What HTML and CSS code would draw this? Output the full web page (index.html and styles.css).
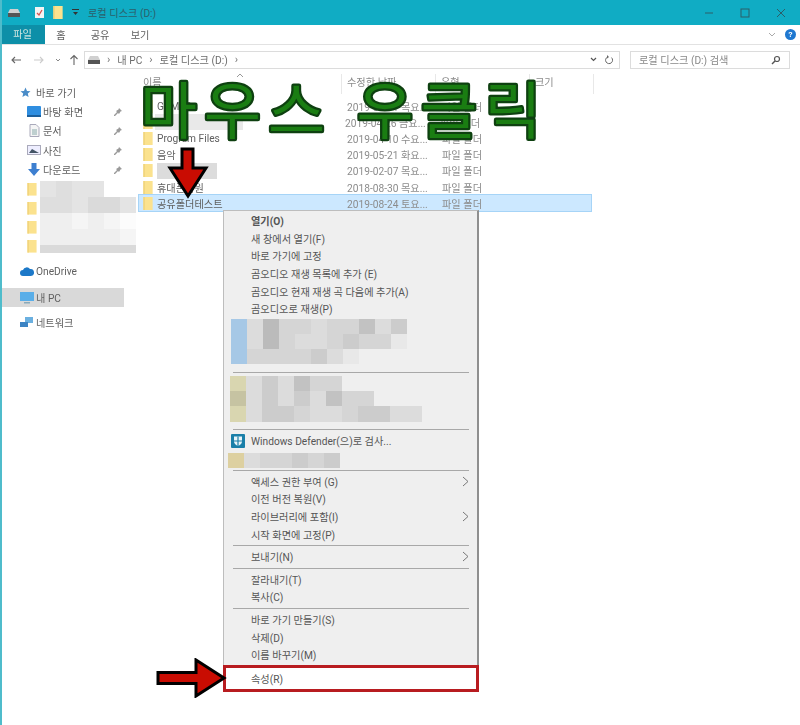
FILE: index.html
```html
<!DOCTYPE html>
<html lang="ko">
<head>
<meta charset="utf-8">
<title>로컬 디스크 (D:)</title>
<link rel="stylesheet" href="styles.css">
</head>
<body>
<svg class="defs" width="0" height="0" aria-hidden="true">
  <symbol id="folder" viewBox="0 0 10 14"><rect width="10" height="14" fill="#fbe28e"/><rect x="0" y="0" width="1.500" height="14" fill="#efd27a"/></symbol>
  <symbol id="pin" viewBox="0 0 10 10"><path d="M6 1l3 3-1.500.5L6 7 5 6 2 9l-1 0 0-1 3-3-1-1 2.500-1.500z" fill="#9a9a9a"/></symbol>
  <symbol id="drive" viewBox="0 0 12 8"><path d="M2 0h8l2 4v4H0V4z" fill="#d0d0d0"/><rect y="4" width="12" height="4" fill="#555"/></symbol>
</svg>
<div class="window">
  <header class="titlebar">
    <svg class="t-ico" width="12" height="8"><use href="#drive"/></svg>
    <svg class="t-doc" width="9" height="11" viewBox="0 0 9 11"><rect width="9" height="11" fill="#f4f4f4"/><path d="M2 6l2 2 3-5" stroke="#d9534f" stroke-width="1.300" fill="none"/></svg>
    <svg class="t-fold" width="10" height="13"><use href="#folder"/></svg>
    <svg class="t-drop" width="7" height="7" viewBox="0 0 7 7"><rect y="0" width="7" height="1" fill="#333"/><path d="M1 3h5L3.500 6z" fill="#333"/></svg>
    <span class="t-text">로컬 디스크 (D:)</span>
    <span class="t-controls">
      <svg width="10" height="10" viewBox="0 0 10 10"><path d="M1 5h8" stroke="#2c5e68" stroke-width="1"/></svg>
      <svg width="10" height="10" viewBox="0 0 10 10"><rect x="1" y="1" width="8" height="8" fill="none" stroke="#2c5e68"/></svg>
      <svg width="10" height="10" viewBox="0 0 10 10"><path d="M1 1l8 8M9 1l-8 8" stroke="#2c5e68"/></svg>
    </span>
  </header>
  <nav class="ribbon">
    <span class="tab tab-file">파일</span>
    <span class="tab">홈</span>
    <span class="tab">공유</span>
    <span class="tab">보기</span>
    <span class="ribbon-end">
      <svg width="8" height="5" viewBox="0 0 8 5"><path d="M1 1l3 3 3-3" stroke="#aaa" fill="none"/></svg>
      <span class="help">?</span>
    </span>
  </nav>
  <div class="addressrow">
    <svg width="12" height="10" viewBox="0 0 12 10"><path d="M11 5H2M5 2L2 5l3 3" stroke="#666" stroke-width="1.100" fill="none"/></svg>
    <svg class="nav-fwd" width="12" height="10" viewBox="0 0 12 10"><path d="M1 5h9M7 2l3 3-3 3" stroke="#ccc" stroke-width="1.100" fill="none"/></svg>
    <svg class="nav-drop" width="6" height="4" viewBox="0 0 6 4"><path d="M1 1l2 2 2-2" stroke="#888" fill="none"/></svg>
    <svg class="nav-up" width="10" height="11" viewBox="0 0 10 11"><path d="M5 11V2M1.500 5L5 1.500 8.500 5" stroke="#666" stroke-width="1.100" fill="none"/></svg>
    <div class="address">
      <svg width="12" height="8"><use href="#drive"/></svg>
      <span class="crumb-sep">›</span><span>내 PC</span>
      <span class="crumb-sep">›</span><span>로컬 디스크 (D:)</span>
      <span class="crumb-sep">›</span>
      <span class="addr-end">
        <svg width="7" height="5" viewBox="0 0 7 5"><path d="M1 1l2.500 2.500L6 1" stroke="#555" stroke-width="1.200" fill="none"/></svg>
        <svg class="refresh" width="10" height="10" viewBox="0 0 10 10"><path d="M7.500 2.600A3.500 3.500 0 1 1 3.500 2" stroke="#666" fill="none"/><path d="M3 0l2 2-2 1.500z" fill="#666"/></svg>
      </span>
    </div>
    <div class="search">
      <span>로컬 디스크 (D:) 검색</span>
      <svg width="10" height="10" viewBox="0 0 10 10"><circle cx="6" cy="4" r="2.500" stroke="#555" fill="none" stroke-width="1.200"/><path d="M4 6L1 9" stroke="#555" stroke-width="1.500"/></svg>
    </div>
  </div>
  <div class="main">
    <aside class="sidebar">
      <div class="nav nav-top">
        <svg width="11" height="11" viewBox="0 0 11 11"><path d="M5.500.5l1.500 3.400 3.500.3-2.700 2.300.8 3.500-3.100-1.800-3.100 1.800.8-3.500L.5 4.200 4 3.900z" fill="#4a8cc8"/></svg>
        <span>바로 가기</span>
      </div>
      <div class="nav nav-sub">
        <svg width="14" height="11" viewBox="0 0 14 11"><rect width="14" height="10" rx="1" fill="#2f8ee0"/><rect y="9" width="14" height="2" fill="#1c5f9c"/></svg>
        <span>바탕 화면</span><svg class="pin" width="10" height="10"><use href="#pin"/></svg>
      </div>
      <div class="nav nav-sub">
        <svg width="14" height="13" viewBox="0 0 14 13"><path d="M3 .5h6l3 3v9H3z" fill="#f5f5f5" stroke="#aab"/><path d="M5 6h5M5 8h5M5 10h5" stroke="#8aa"/></svg>
        <span>문서</span><svg class="pin" width="10" height="10"><use href="#pin"/></svg>
      </div>
      <div class="nav nav-sub">
        <svg width="14" height="11" viewBox="0 0 14 11"><rect x=".5" y=".5" width="13" height="9" fill="#eef" stroke="#aab"/><path d="M2 8l3-4 7 4z" fill="#456"/></svg>
        <span>사진</span><svg class="pin" width="10" height="10"><use href="#pin"/></svg>
      </div>
      <div class="nav nav-sub">
        <svg width="14" height="13" viewBox="0 0 14 13"><path d="M4.500 0h5v6H13l-6 7-6-7h3.500z" fill="#3d7fd0"/></svg>
        <span>다운로드</span><svg class="pin" width="10" height="10"><use href="#pin"/></svg>
      </div>
      <div class="side-blur">
        <div class="side-folders">
          <svg width="10" height="13"><use href="#folder"/></svg>
          <svg width="10" height="13"><use href="#folder"/></svg>
          <svg width="10" height="13"><use href="#folder"/></svg>
          <svg width="10" height="13"><use href="#folder"/></svg>
        </div>
        <div class="side-mosaic">
          <div class="mosaic"><i class="n1"></i><i class="n2"></i><i class="n1"></i><i class="n1"></i></div>
          <div class="mosaic"><i class="n2"></i><i class="n2"></i><i class="n1"></i><i class="n5"></i><i class="n5"></i><i class="n1"></i></div>
          <div class="mosaic"><i class="n3"></i><i class="n3"></i><i class="n4"></i><i class="n3"></i><i class="n4"></i><i class="n6"></i></div>
          <div class="mosaic"><i class="n3"></i><i class="n3"></i><i class="n3"></i><i class="n3"></i><i class="n3"></i><i class="n4"></i></div>
          <div class="mosaic mosaic-band"><i class="n5"></i><i class="n5"></i><i class="n5"></i><i class="n5"></i><i class="n5"></i><i class="n5"></i></div>
        </div>
      </div>
      <div class="nav nav-top nav-wide nav-drive">
        <svg width="14" height="9" viewBox="0 0 14 9"><path d="M3 9a3 3 0 0 1 0-6 4 4 0 0 1 7-1 3.500 3.500 0 0 1 1 7z" fill="#1c78c8"/></svg>
        <span>OneDrive</span>
      </div>
      <div class="nav nav-top nav-wide nav-pc">
        <svg width="14" height="12" viewBox="0 0 14 12"><rect width="14" height="9" fill="#5aaee8"/><rect x="4" y="10" width="6" height="1.500" fill="#8ab"/></svg>
        <span>내 PC</span>
      </div>
      <div class="nav nav-top nav-wide nav-net">
        <svg width="14" height="11" viewBox="0 0 14 11"><rect x="5" y="0" width="8" height="6" fill="#6bb0e0"/><rect x="0" y="5" width="8" height="5" fill="#3c84c4"/></svg>
        <span>네트워크</span>
      </div>
    </aside>
    <section class="files">
      <div class="columns">
        <span class="col-name">이름</span>
        <span class="col-date">수정한 날짜</span>
        <span class="col-type">유형</span>
        <span class="col-size">크기</span>
      </div>
      <div class="row"><svg width="10" height="13"><use href="#folder"/></svg><span class="name">GAMES</span><span class="date">2019-08-01 목요...</span><span class="type">파일 폴더</span></div>
      <div class="row"><svg width="10" height="13"><use href="#folder"/></svg><span class="name name-blur"></span><span class="date">2019-04-26 금요...</span><span class="type">파일 폴더</span></div>
      <div class="row"><svg width="10" height="13"><use href="#folder"/></svg><span class="name">Program Files</span><span class="date">2019-04-10 수요...</span><span class="type">파일 폴더</span></div>
      <div class="row"><svg width="10" height="13"><use href="#folder"/></svg><span class="name">음악</span><span class="date">2019-05-21 화요...</span><span class="type">파일 폴더</span></div>
      <div class="row"><svg width="10" height="13"><use href="#folder"/></svg><span class="name name-blur2"></span><span class="date">2019-02-07 목요...</span><span class="type">파일 폴더</span></div>
      <div class="row"><svg width="10" height="13"><use href="#folder"/></svg><span class="name">휴대폰자원</span><span class="date">2018-08-30 목요...</span><span class="type">파일 폴더</span></div>
      <div class="row row-selected"><svg width="10" height="13"><use href="#folder"/></svg><span class="name">공유폴더테스트</span><span class="date">2019-08-24 토요...</span><span class="type">파일 폴더</span></div>
    </section>
  </div>

  <svg class="sort-caret" width="8" height="5" viewBox="0 0 8 5"><path d="M1 4l3-3 3 3" stroke="#999" fill="none"/></svg>
  <svg class="headline" width="440" height="90" viewBox="0 0 440 90"><text class="headline-text" x="2" y="64">마우스 우클릭</text></svg>
  <svg class="arrow-down" width="44" height="54" viewBox="0 0 44 54"><path d="M16 2h11v19h13L22 49 4 21h12z" fill="#c90c02" stroke="#000" stroke-width="3"/></svg>

  <div class="menu">
    <div class="mi mi-bold">열기(O)</div>
    <div class="mi">새 창에서 열기(F)</div>
    <div class="mi">바로 가기에 고정</div>
    <div class="mi">곰오디오 재생 목록에 추가 (E)</div>
    <div class="mi">곰오디오 현재 재생 곡 다음에 추가(A)</div>
    <div class="mi">곰오디오로 재생(P)</div>
    <div class="mblock">
      <div class="mrow"><i class="b"></i><i class="s2"></i><i class="s6"></i><i class="s3"></i><i class="s3"></i><i class="s2"></i><i class="s3"></i><i class="s3"></i><i class="s5"></i><i class="s2"></i><i class="s4"></i></div>
      <div class="mrow"><i class="b"></i><i class="s2"></i><i class="s6"></i><i class="s3"></i><i class="s2"></i><i class="s2"></i><i class="s3"></i><i class="s4"></i><i class="s3"></i><i class="s3"></i><i class="s1"></i></div>
      <div class="mrow"><i class="b"></i><i class="s3"></i><i class="s3"></i><i class="s3"></i><i class="s3"></i><i class="s4"></i><i class="s2"></i><i class="s1"></i></div>
    </div>
    <hr class="sep sep-a">
    <div class="mblock mblock-two">
      <div class="mrow"><i class="y1"></i><i class="s2"></i><i class="s4"></i><i class="s2"></i><i class="s5"></i><i class="s3"></i><i class="s3"></i></div>
      <div class="mrow"><i class="y2"></i><i class="s2"></i><i class="s4"></i><i class="s2"></i><i class="s4"></i><i class="s2"></i><i class="s5"></i><i class="s3"></i><i class="s3"></i></div>
      <div class="mrow mrow-tall"><i class="y1"></i><i class="s2"></i><i class="s4"></i><i class="s4"></i><i class="s3"></i><i class="s2"></i><i class="s2"></i><i class="s3"></i><i class="s4"></i><i class="s4"></i><i class="s2"></i><i class="s2"></i></div>
    </div>
    <hr class="sep sep-b">
    <div class="mi mi-icon">
      <svg width="14" height="14" viewBox="0 0 14 14"><rect width="14" height="14" rx="1" fill="#1a7fa8"/><path d="M3 2.500h8v5c0 2-2 3.500-4 4.500-2-1-4-2.500-4-4.500z" fill="#e8f4f8"/><path d="M7 2.500V12M3 7h8" stroke="#1a7fa8" stroke-width="1.200"/></svg>
      <span>Windows Defender(으)로 검사...</span>
    </div>
    <div class="mrow mrow-three"><i class="y3"></i><i class="s2"></i><i class="s3"></i><i class="s3"></i><i class="s4"></i><i class="s3"></i><i class="s4"></i></div>
    <hr class="sep sep-c">
    <div class="mi mi-sub">액세스 권한 부여 (G)<svg width="7" height="11" viewBox="0 0 7 11"><path d="M1 1l5 4.500L1 10" stroke="#777" fill="none"/></svg></div>
    <div class="mi">이전 버전 복원(V)</div>
    <div class="mi mi-sub">라이브러리에 포함(I)<svg width="7" height="11" viewBox="0 0 7 11"><path d="M1 1l5 4.500L1 10" stroke="#777" fill="none"/></svg></div>
    <div class="mi">시작 화면에 고정(P)</div>
    <hr class="sep sep-d">
    <div class="mi mi-sub">보내기(N)<svg width="7" height="11" viewBox="0 0 7 11"><path d="M1 1l5 4.500L1 10" stroke="#777" fill="none"/></svg></div>
    <hr class="sep sep-d">
    <div class="mi">잘라내기(T)</div>
    <div class="mi">복사(C)</div>
    <hr class="sep sep-d">
    <div class="mi">바로 가기 만들기(S)</div>
    <div class="mi">삭제(D)</div>
    <div class="mi">이름 바꾸기(M)</div>
    <div class="mi mi-hot">속성(R)</div>
  </div>
  <svg class="arrow-right" width="72" height="40" viewBox="0 0 72 40"><path d="M2 14.500h38V2l28 18-28 18V25.500H2z" fill="#c90c02" stroke="#000" stroke-width="3"/></svg>
</div>
</body>
</html>
```

FILE: styles.css
```css
* { box-sizing: border-box; }
html, body { margin: 0; padding: 0; background: #fff; }
body { width: 800px; height: 725px; overflow: hidden; }
.defs { position: absolute; }
.window {
  position: relative;
  width: 800px;
  height: 725px;
  overflow: hidden;
  border-left: 2px solid #4fbccb;
  font-family: Roboto, "Noto Sans CJK KR", "Noto Sans", sans-serif;
  font-size: 10.2px;
  color: #5f5f5f;
  filter: blur(0.5px);
}
.titlebar {
  display: flex;
  align-items: center;
  height: 25px;
  margin-left: -2px;
  padding-left: 8px;
  background: #10acc4;
  color: #2b5f6b;
  font-size: 10.2px;
}
.t-doc { margin-left: 15px; }
.t-fold { margin-left: 9px; }
.t-drop { margin-left: 9px; }
.t-text { margin-left: 9px; }
.t-controls { margin-left: auto; display: flex; gap: 26px; padding-right: 14px; }
.ribbon {
  display: flex;
  align-items: center;
  height: 20px;
  margin-left: -2px;
  border-bottom: 1px solid #e2e2e2;
}
.tab { width: 40px; text-align: center; }
.tab:nth-child(2) { margin-left: -4px; margin-right: -1px; }
.tab-file { width: 45px; height: 19px; line-height: 19px; background: #0d8fa8; color: #cfe6e0; }
.ribbon-end { margin-left: auto; display: flex; align-items: center; gap: 9px; padding-right: 4px; }
.help {
  width: 11px; height: 11px; border-radius: 50%;
  background: #1f78d0; color: #fff;
  font-size: 8px; line-height: 11px; text-align: center; font-weight: 700;
}
.addressrow { display: flex; align-items: center; height: 29px; padding-left: 8px; }
.nav-fwd { margin-left: 11px; }
.nav-drop { margin-left: 10px; }
.nav-up { margin-left: 8px; }
.address {
  display: flex; align-items: center; gap: 6px;
  width: 536px; height: 18px; margin-left: 5px; padding-left: 3px;
  border: 1px solid #dcdcdc; color: #6c6c6c;
}
.crumb-sep { color: #777; margin: 0 1px; font-size: 11px; line-height: 11px; }
.addr-end { margin-left: auto; display: flex; align-items: center; gap: 7px; height: 100%; }
.refresh { margin-right: 5px; }
.search {
  display: flex; align-items: center; justify-content: space-between;
  width: 160px; height: 18px; margin-left: 10px; padding: 0 8px;
  border: 1px solid #dcdcdc; color: #888;
}
.main { display: flex; }
.sidebar { width: 136px; padding-top: 9px; flex: none; }
.nav { display: flex; align-items: center; height: 19.2px; color: #5f5f5f; }
.nav-top { padding-left: 18px; gap: 5px; }
.nav-wide { gap: 2px; }
.nav-sub { padding-left: 25px; gap: 2px; position: relative; }
.pin { position: absolute; left: 111px; top: 5px; }
.side-blur { display: flex; gap: 3px; margin-top: 2px; height: 72px; padding-left: 25px; }
.side-folders { display: flex; flex-direction: column; gap: 6.300px; padding-top: 2px; }
.side-mosaic { display: flex; flex-direction: column; }
.mosaic { display: flex; height: 16px; }
.mosaic i { width: 16px; height: 100%; }
.mosaic-band { height: 8px; }
.nav-drive { margin-top: 9px; }
.nav-pc { margin: 7px 14px 6px -2px; padding-left: 20px; background: #d9d9d9; }
.n1 { background: #e4e4e4; }
.n2 { background: #dedede; }
.n3 { background: #efefef; }
.n4 { background: #f5f5f5; }
.n5 { background: #dadada; }
.n6 { background: #fcfcfc; }
.files { flex: 1; }
.columns { display: flex; height: 24px; color: #8c8c8c; }
.columns span { display: block; height: 20px; border-right: 1px solid #e8e8e8; padding-left: 5px; }
.col-name { width: 204px; }
.col-date { width: 94px; }
.col-type { width: 94px; }
.col-size { width: 64px; }
.files .row {
  display: flex; align-items: center;
  width: 454px; height: 16.2px;
  padding-left: 5px; color: #8c8c8c;
}
.row svg { flex: none; }
.name { width: 190px; margin-left: 4px; color: #5f5f5f; }
.date { width: 95px; white-space: nowrap; }
.name-blur { flex: none; width: 88px; height: 16px; margin-right: 102px; margin-left: 2px; background: #e9e9e9; }
.name-blur2 { flex: none; width: 60px; height: 16px; margin-right: 130px; margin-left: 4px; background: #dcdcdc; }
.files .row-selected {
  height: 18px; margin-top: -1px;
  background: #cce8ff; border: 1px solid #a6d4f7; padding-left: 4px;
}
.sort-caret { position: absolute; left: 234px; top: 73px; }
.headline { position: absolute; left: 136px; top: 70px; }
.headline-text {
  font-family: "Noto Sans CJK KR", sans-serif;
  font-size: 62px;
  font-weight: 400;
  letter-spacing: 7px;
  fill: #1a7d12;
  stroke: #0e4010;
  stroke-width: 4.5px;
  stroke-linejoin: round;
  paint-order: stroke;
}
.arrow-down { position: absolute; left: 164px; top: 147px; }
.arrow-right { position: absolute; left: 154px; top: 658px; }
.menu {
  position: absolute;
  left: 221px;
  top: 210px;
  width: 256px;
  height: 482px;
  padding-top: 1px;
  background: #efefef;
  border: 1px solid #bdbdbd;
  border-right: 2px solid #8f8f8f;
  color: #555;
}
.mi { display: flex; align-items: center; height: 17.600px; padding-left: 27px; white-space: nowrap; }
.mi-bold { font-weight: 700; }
.mi-icon { padding-left: 7px; gap: 6px; height: 18px; margin-top: 1px; }
.mi-sub { justify-content: space-between; padding-right: 8px; }
.mi-hot {
  height: 27px;
  margin: 1px -1px 0 -1px;
  background: #fff;
  border: 3px solid #b81c20;
  padding-left: 25px;
  width: 256px;
}
.mblock { margin: 1px 0 0 7px; }
.mrow { display: flex; height: 15px; }
.mrow i { width: 16px; height: 100%; }
.mrow-tall { height: 16px; }
.mblock-two { margin: 3px 0 0 6px; }
.mrow-three { margin: 3px 0 0 4px; }
.sep { height: 1px; margin: 6px 8px 0 9px; border: 0; background: #a8a8a8; }
.sep-a { margin-top: 8px; }
.sep-b { margin-top: 7px; margin-bottom: 2px; }
.sep-c { margin-top: 2px; margin-bottom: 2px; }
.sep-d { margin-top: 2px; margin-bottom: 2px; }
.b { background: #a6c8e6; }
.s1 { background: #e8e8e8; }
.s2 { background: #dcdcdc; }
.s3 { background: #d5d5d5; }
.s4 { background: #cccccc; }
.s5 { background: #c2c2c2; }
.s6 { background: #bbbbbb; }
.y1 { background: #d9d6b0; }
.y2 { background: #c6c3a2; }
.y3 { background: #ddd0a0; }
```
